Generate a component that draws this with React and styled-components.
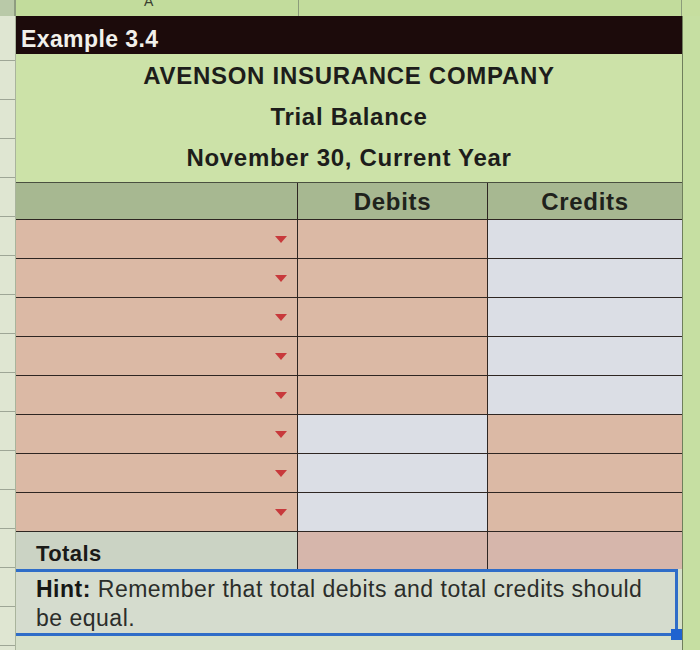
import React from 'react';
import styled, { createGlobalStyle } from 'styled-components';

const GlobalStyle = createGlobalStyle`
  html, body {
    margin: 0;
    padding: 0;
    background: #d6e0c9;
  }
  body {
    font-family: "Liberation Sans", Arial, sans-serif;
  }
`;

const ROWS = 8;

const tones = {
  salmon: '#dbb9a5',
  light: '#dbdee5',
  head: '#a7b891',
  total: '#cbd3c4',
  totalSalmon: '#d6b6ab',
};

const App = () => {
  const rows = Array.from({ length: ROWS }, (_, i) => i);

  return (
    <>
      <GlobalStyle />
      <Page>
        <Corner />
        <ColumnHeads>
          <ColHead $w="282px">
            <ColLetter>A</ColLetter>
          </ColHead>
          <ColHead $w="auto" />
        </ColumnHeads>
        <RightHead />

        <RowHeads />
        <Sheet>
          <TitleBar>Example 3.4</TitleBar>
          <TitleBlock>
            <TitleLine>AVENSON INSURANCE COMPANY</TitleLine>
            <TitleLine>Trial Balance</TitleLine>
            <TitleLine>November 30, Current Year</TitleLine>
          </TitleBlock>

          <Table>
            <Cell $tone="head" />
            <Cell $tone="head">
              <HeadText>Debits</HeadText>
            </Cell>
            <Cell $tone="head" $last>
              <HeadText>Credits</HeadText>
            </Cell>

            {rows.map((i) => (
              <React.Fragment key={i}>
                <Cell $tone="salmon" $h="39px">
                  <Caret />
                </Cell>
                <Cell $tone={i < 5 ? 'salmon' : 'light'} $h="39px" />
                <Cell $tone={i < 5 ? 'light' : 'salmon'} $h="39px" $last />
              </React.Fragment>
            ))}

            <Cell $tone="total" $h="37px" $noBottom>
              <TotalsText>Totals</TotalsText>
            </Cell>
            <Cell $tone="totalSalmon" $h="37px" $noBottom />
            <Cell $tone="totalSalmon" $h="37px" $noBottom $last />
          </Table>

          <HintBox>
            <HintText>
              <b>Hint:</b> Remember that total debits and total credits should
              be equal.
            </HintText>
            <Handle />
          </HintBox>
        </Sheet>
        <RightStrip />
      </Page>
    </>
  );
};

export default App;

const Page = styled.div`
  width: 700px;
  height: 650px;
  overflow: hidden;
  display: grid;
  grid-template-columns: 16px 666px 18px;
  grid-template-rows: 16px 1fr;
  background: #d6e0c9;
`;

const Corner = styled.div`
  background: #b9c9a8;
  border-right: 2px solid #8e9c80;
`;

const ColumnHeads = styled.div`
  display: flex;
  background: #c2dc9c;
`;

const ColHead = styled.div`
  position: relative;
  width: ${(p) => p.$w};
  flex: ${(p) => (p.$w === 'auto' ? 1 : 'none')};
  border-right: 1px solid #8c9c7a;
  overflow: hidden;
`;

const ColLetter = styled.span`
  position: absolute;
  left: 128px;
  top: -6px;
  font-size: 14px;
  line-height: 14px;
  color: #3a4030;
`;

const RightHead = styled.div`
  background: #c6de9f;
`;

const RowHeads = styled.div`
  background-color: #dfe6d2;
  background-image: repeating-linear-gradient(
    to bottom,
    transparent 0,
    transparent 38px,
    #9ea696 38px,
    #9ea696 39px
  );
  background-position: 0 6px;
  border-right: 1px solid #a9b49c;
`;

const RightStrip = styled.div`
  background: #c6dfa2;
  border-left: 1px solid #6f7f5c;
`;

const Sheet = styled.div`
  display: flex;
  flex-direction: column;
`;

const TitleBar = styled.div`
  height: 38px;
  background: #1c0b0b;
  color: #f1f0ea;
  font-size: 23px;
  font-weight: 700;
  letter-spacing: 0.4px;
  line-height: 46px;
  padding-left: 5px;
  overflow: hidden;
`;

const TitleBlock = styled.div`
  height: 129px;
  box-sizing: border-box;
  padding: 1px 0 5px;
  background: #cce2a8;
  display: flex;
  flex-direction: column;
  align-items: center;
  border-bottom: 1px solid #4a5040;
`;

const TitleLine = styled.div`
  height: 41px;
  line-height: 41px;
  font-size: 24px;
  font-weight: 700;
  letter-spacing: 0.7px;
  color: #1d1d1b;
`;

const Table = styled.div`
  display: grid;
  grid-template-columns: 282px 190px 1fr;
`;

const Cell = styled.div`
  position: relative;
  box-sizing: border-box;
  height: ${(p) => p.$h || '37px'};
  background: ${(p) => tones[p.$tone]};
  border-bottom: ${(p) => (p.$noBottom ? 'none' : '1.5px solid #2e2622')};
  border-right: ${(p) => (p.$last ? 'none' : '1.5px solid #2e2622')};
  display: flex;
  align-items: center;
`;

const HeadText = styled.span`
  width: 100%;
  text-align: center;
  font-size: 24px;
  font-weight: 700;
  letter-spacing: 0.7px;
  color: #1f221c;
  padding-top: 1px;
`;

const Caret = styled.span`
  position: absolute;
  right: 10px;
  top: 16px;
  width: 0;
  height: 0;
  border-left: 6px solid transparent;
  border-right: 6px solid transparent;
  border-top: 7px solid #c8393b;
`;

const TotalsText = styled.span`
  padding-left: 20px;
  padding-top: 6px;
  font-size: 22px;
  font-weight: 700;
  letter-spacing: 0.4px;
  color: #1a1a18;
`;

const HintBox = styled.div`
  position: relative;
  height: 67px;
  box-sizing: border-box;
  margin-right: 4px;
  background: #d5dcce;
  border-top: 3px solid #2f6dc8;
  border-right: 3px solid #2f6dc8;
  border-bottom: 3px solid #2f6dc8;
  padding: 3px 0 0 20px;
`;

const HintText = styled.div`
  font-size: 23px;
  line-height: 29px;
  color: #2b2d2a;
  letter-spacing: 0.5px;
  b {
    color: #161715;
  }
`;

const Handle = styled.span`
  position: absolute;
  right: -7px;
  bottom: -7px;
  width: 11px;
  height: 11px;
  background: #1f63d0;
`;
